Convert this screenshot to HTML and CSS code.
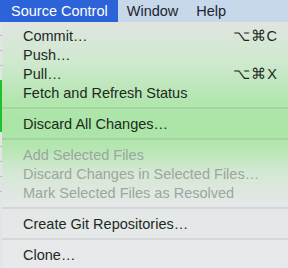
FILE: index.html
```html
<!DOCTYPE html>
<html lang="en">
<head>
    <meta charset="UTF-8">
    <title>Source Control Menu</title>
    <link rel="stylesheet" href="styles.css">
</head>
<body>
    <div class="menubar">
        <div class="menubar-item active">Source Control</div>
        <div class="menubar-item">Window</div>
        <div class="menubar-item">Help</div>
    </div>
    <div class="screen">
        <div class="behind">
            <div class="behind-line"></div>
            <div class="behind-line"></div>
            <div class="behind-line"></div>
            <div class="behind-green"></div>
            <div class="behind-line"></div>
            <div class="behind-line"></div>
            <div class="behind-line"></div>
            <div class="behind-line"></div>
        </div>
        <div class="menu">
            <div class="item"><span>Commit…</span><span class="keys">⌥⌘C</span></div>
            <div class="item"><span>Push…</span></div>
            <div class="item"><span>Pull…</span><span class="keys">⌥⌘X</span></div>
            <div class="item"><span>Fetch and Refresh Status</span></div>
            <div class="sep"></div>
            <div class="item"><span>Discard All Changes…</span></div>
            <div class="sep"></div>
            <div class="item disabled"><span>Add Selected Files</span></div>
            <div class="item disabled"><span>Discard Changes in Selected Files…</span></div>
            <div class="item disabled"><span>Mark Selected Files as Resolved</span></div>
            <div class="sep"></div>
            <div class="item"><span>Create Git Repositories…</span></div>
            <div class="sep"></div>
            <div class="item"><span>Clone…</span></div>
        </div>
    </div>
</body>
</html>
```

FILE: styles.css
```css
body {
    margin: 0;
    font-family: "Liberation Sans", Arial, sans-serif;
    font-size: 14.5px;
    background: #e4e6e8;
    width: 288px;
    height: 268px;
    overflow: hidden;
}
.menubar {
    display: flex;
    height: 22px;
    background: #c6d8ea;
    color: #1c2530;
}
.menubar-item {
    display: flex;
    align-items: center;
    padding: 0 9px;
}
.menubar-item.active {
    background: #2c63d8;
    color: #fff;
    padding: 0 10px 0 11px;
}
.screen {
    display: flex;
    height: 246px;
}
.behind {
    width: 2px;
    display: flex;
    flex-direction: column;
    gap: 14px;
    padding-top: 13px;
    background: #e2e4e6;
}
.behind-line {
    height: 1px;
    background: #b8bcc0;
}
.behind-green {
    height: 52px;
    background: #1ec02c;
}
.menu {
    flex: 1;
    padding: 4px 0 5px;
    border-radius: 0 0 6px 6px;
    background: linear-gradient(to bottom,
        #dfe5e0 0px,
        #cfe9cf 40px,
        #b2e6ae 80px,
        #a9e5a5 105px,
        #b5e6b1 125px,
        #d4e8d4 150px,
        #e3e7e6 180px,
        #e8e9eb 246px);
}
.item {
    display: flex;
    justify-content: space-between;
    align-items: center;
    height: 19px;
    padding: 0 10px 0 21px;
    color: #1d2a1e;
}
.item.disabled {
    color: #9aa79c;
}
.keys {
    letter-spacing: 1px;
}
.sep {
    height: 2px;
    margin: 5px 0;
    background: rgba(0, 0, 0, 0.07);
}
```
